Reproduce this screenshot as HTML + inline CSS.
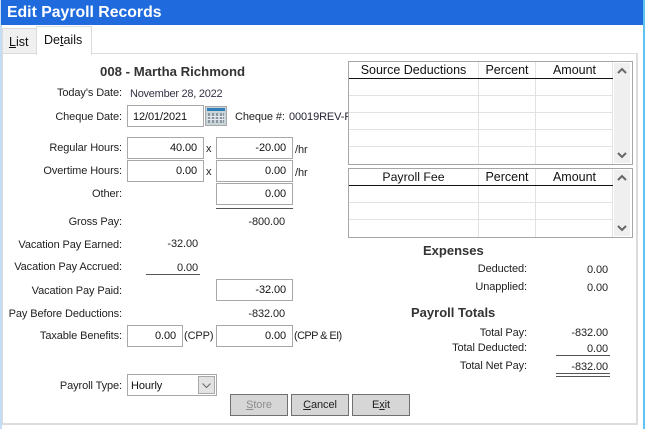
<!DOCTYPE html>
<html><head><meta charset="utf-8"><style>
html,body{margin:0;padding:0}
body{width:645px;height:429px;position:relative;overflow:hidden;background:#fff;font-family:"Liberation Sans",sans-serif;font-size:11px;letter-spacing:-.1px;color:#222}
div{position:absolute;box-sizing:border-box}
.t{white-space:nowrap;line-height:14px;height:14px}
.l{right:523px}
.l2{right:118px}
.v{text-align:right}
.in{border:1px solid #a8a8a8;background:#fff;line-height:20px;text-align:right;padding-right:6px;font-size:11px;color:#111}
.btn{border:1px solid #707070;background:#d6d6d6;text-align:center;line-height:20px;width:58px;height:22px;top:394px;font-size:11px}
.hl{background:#e2e2e2;height:1px}
.vl{background:#e2e2e2;width:1px}
.k{background:#555;height:1px}
.hd{font-size:12.5px;letter-spacing:0;color:#111;line-height:14px;white-space:nowrap;text-align:center}
.b{font-weight:bold;font-size:13px;letter-spacing:0;color:#333;white-space:nowrap;line-height:16px}
u{text-decoration:underline}
</style></head><body>
<div style="left:0;top:0;width:2px;height:429px;background:#c4dcf4"></div>
<div style="left:643px;top:0;width:2px;height:429px;background:#5cc4ef"></div>
<div style="left:1px;top:0;width:642px;height:25px;background:#1f6bdd;color:#fff;font-weight:bold;font-size:15.8px;letter-spacing:0;line-height:26px;padding-left:6px">Edit Payroll Records</div>

<div style="left:2px;top:53px;width:636px;height:372px;border:1px solid #dcdcdc;border-width:1px 2px 2px 1px"></div>
<div style="left:2px;top:28px;width:35px;height:26px;background:#f0f0f0;border:1px solid #dcdcdc;font-size:12.5px;letter-spacing:0;line-height:26px;padding-left:6px;color:#111"><u>L</u>ist</div>
<div style="left:36px;top:26px;width:56px;height:29px;background:#fff;border:1px solid #dcdcdc;border-bottom:none;font-size:12.5px;letter-spacing:0;line-height:26px;padding-left:7px;color:#111">De<u>t</u>ails</div>

<div class="b" style="left:100px;top:64px;font-size:13.2px">008 - Martha Richmond</div>

<div class="t l" style="top:86px">Today's Date:</div>
<div class="t" style="left:130px;top:87px;font-size:11px;letter-spacing:-.25px;color:#334">November 28, 2022</div>
<div class="t l" style="top:110px">Cheque Date:</div>
<div class="in" style="left:127px;top:105px;width:77px;height:22px;text-align:left;padding-left:5px;line-height:22px">12/01/2021</div>
<svg style="position:absolute;left:205px;top:106px" width="22" height="20" viewBox="0 0 22 20"><rect x=".5" y=".5" width="21" height="19" fill="#c9d3da" stroke="#a8a8a8"/><rect x="2" y="2" width="18" height="3" fill="#2f7fb8"/><g fill="#8b969e"><rect x="3" y="7" width="2" height="10"/><rect x="7" y="7" width="2" height="10"/><rect x="11" y="7" width="2" height="10"/><rect x="15" y="7" width="2" height="10"/><rect x="18" y="7" width="1" height="10"/></g><g fill="#e4eaee"><rect x="2" y="10" width="18" height="1"/><rect x="2" y="13" width="18" height="1"/></g></svg>
<div class="t" style="left:235px;top:110px">Cheque #:</div>
<div class="t" style="left:289px;top:110px;width:59px;overflow:hidden;color:#223">00019REV-R</div>

<div class="t l" style="top:141px">Regular Hours:</div>
<div class="in" style="left:127px;top:137px;width:77px;height:22px">40.00</div>
<div class="t" style="left:206px;top:142px">x</div>
<div class="in" style="left:216px;top:137px;width:77px;height:22px">-20.00</div>
<div class="t" style="left:295px;top:143px">/hr</div>

<div class="t l" style="top:164px">Overtime Hours:</div>
<div class="in" style="left:127px;top:160px;width:77px;height:22px">0.00</div>
<div class="t" style="left:206px;top:165px">x</div>
<div class="in" style="left:216px;top:160px;width:77px;height:22px">0.00</div>
<div class="t" style="left:295px;top:166px">/hr</div>

<div class="t l" style="top:187px">Other:</div>
<div class="in" style="left:216px;top:183px;width:77px;height:22px">0.00</div>
<div class="k" style="left:216px;top:208px;width:77px;height:1px"></div>

<div class="t l" style="top:215px">Gross Pay:</div>
<div class="t v" style="left:215px;top:215px;width:70px">-800.00</div>

<div class="t l" style="top:238px">Vacation Pay Earned:</div>
<div class="t v" style="left:128px;top:237px;width:70px">-32.00</div>
<div class="t l" style="top:260px">Vacation Pay Accrued:</div>
<div class="t v" style="left:128px;top:261px;width:70px">0.00</div>
<div class="k" style="left:146px;top:274px;width:54px"></div>

<div class="t l" style="top:284px">Vacation Pay Paid:</div>
<div class="in" style="left:216px;top:279px;width:77px;height:22px">-32.00</div>
<div class="t l" style="top:307px">Pay Before Deductions:</div>
<div class="t v" style="left:215px;top:307px;width:70px">-832.00</div>

<div class="t l" style="top:329px">Taxable Benefits:</div>
<div class="in" style="left:127px;top:325px;width:56px;height:22px">0.00</div>
<div class="t" style="left:184px;top:329px">(CPP)</div>
<div class="in" style="left:216px;top:325px;width:77px;height:22px">0.00</div>
<div class="t" style="left:294px;top:329px;letter-spacing:-.6px">(CPP &amp; EI)</div>

<div class="t l" style="top:379px">Payroll Type:</div>
<div class="in" style="left:127px;top:374px;width:90px;height:22px;text-align:left;padding-left:3px;line-height:22px">Hourly</div>
<div style="left:198px;top:376px;width:17px;height:18px;background:#e3e3e3;border:1px solid #a8a8a8"></div>
<svg style="position:absolute;left:198px;top:376px" width="17" height="18"><path d="M4.500 7.500L8.500 11.500L12.500 7.500" fill="none" stroke="#666" stroke-width="1"/></svg>

<div class="btn" style="left:230px;color:#8e8e8e"><u>S</u>tore</div>
<div class="btn" style="left:291px"><u>C</u>ancel</div>
<div class="btn" style="left:352px">E<u>x</u>it</div>

<!-- grid 1 -->
<div style="left:348px;top:61px;width:285px;height:104px;border:1px solid #a6a6a6"></div>
<div class="hd" style="left:349px;top:63px;width:129px">Source Deductions</div>
<div class="hd" style="left:479px;top:63px;width:56px">Percent</div>
<div class="hd" style="left:536px;top:63px;width:77px">Amount</div>
<div class="hl" style="left:349px;top:95px;width:264px"></div>
<div class="hl" style="left:349px;top:112px;width:264px"></div>
<div class="hl" style="left:349px;top:129px;width:264px"></div>
<div class="hl" style="left:349px;top:146px;width:264px"></div>
<div class="vl" style="left:478px;top:62px;height:102px"></div>
<div class="vl" style="left:535px;top:62px;height:102px"></div>
<div class="vl" style="left:612px;top:62px;height:102px"></div>
<div style="left:349px;top:78px;width:264px;height:1px;background:#111"></div>
<div style="left:614px;top:63px;width:16px;height:100px;background:#efefef"></div>
<svg style="position:absolute;left:614px;top:63px" width="16" height="100"><path d="M4 10L8 6L12 10" fill="none" stroke="#666" stroke-width="2"/><path d="M4 90L8 94L12 90" fill="none" stroke="#666" stroke-width="2"/></svg>

<!-- grid 2 -->
<div style="left:348px;top:168px;width:285px;height:70px;border:1px solid #a6a6a6"></div>
<div class="hd" style="left:349px;top:170px;width:129px;font-size:12.3px">Payroll Fee</div>
<div class="hd" style="left:479px;top:170px;width:56px">Percent</div>
<div class="hd" style="left:536px;top:170px;width:77px">Amount</div>
<div class="hl" style="left:349px;top:202px;width:264px"></div>
<div class="hl" style="left:349px;top:219px;width:264px"></div>
<div class="vl" style="left:478px;top:169px;height:68px"></div>
<div class="vl" style="left:535px;top:169px;height:68px"></div>
<div class="vl" style="left:612px;top:169px;height:68px"></div>
<div style="left:349px;top:185px;width:264px;height:1px;background:#111"></div>
<div style="left:614px;top:170px;width:16px;height:66px;background:#efefef"></div>
<svg style="position:absolute;left:614px;top:170px" width="16" height="66"><path d="M4 10L8 6L12 10" fill="none" stroke="#666" stroke-width="2"/><path d="M4 56L8 60L12 56" fill="none" stroke="#666" stroke-width="2"/></svg>

<div class="b" style="left:423px;top:243px">Expenses</div>
<div class="t l2" style="top:262px">Deducted:</div>
<div class="t v" style="left:538px;top:263px;width:70px">0.00</div>
<div class="t l2" style="top:280px">Unapplied:</div>
<div class="t v" style="left:538px;top:281px;width:70px">0.00</div>

<div class="b" style="left:411px;top:305px">Payroll Totals</div>
<div class="t l2" style="top:326px">Total Pay:</div>
<div class="t v" style="left:538px;top:326px;width:70px">-832.00</div>
<div class="t l2" style="top:341px">Total Deducted:</div>
<div class="t v" style="left:538px;top:342px;width:70px">0.00</div>
<div class="k" style="left:556px;top:355px;width:54px"></div>
<div class="t l2" style="top:359px">Total Net Pay:</div>
<div class="t v" style="left:538px;top:360px;width:70px">-832.00</div>
<div class="k" style="left:556px;top:373px;width:54px"></div>
<div class="k" style="left:556px;top:376px;width:54px"></div>
</body></html>
